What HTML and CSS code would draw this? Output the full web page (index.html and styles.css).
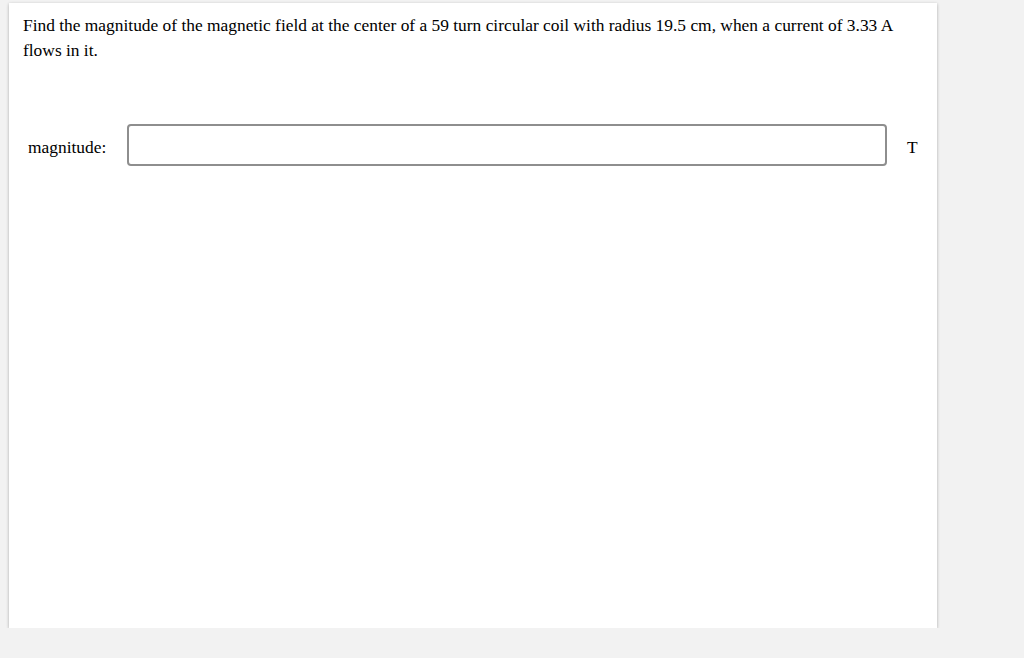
FILE: index.html
```html
<!DOCTYPE html>
<html>
<head>
<meta charset="utf-8">
<link rel="stylesheet" href="styles.css">
</head>
<body>
<div class="card">
  <p class="question">Find the magnitude of the magnetic field at the center of a 59 turn circular coil with radius 19.5 cm, when a current of 3.33 A flows in it.</p>
  <div class="answer-row">
    <label class="label">magnitude:</label>
    <div class="input"></div>
    <span class="unit">T</span>
  </div>
</div>
</body>
</html>
```
FILE: styles.css
```css
html, body {
  margin: 0;
  padding: 0;
  background: #f2f2f2;
  font-family: "Liberation Serif", "Times New Roman", serif;
  font-size: 17.4px;
  color: #000;
}
body {
  padding: 3px 0 0 9px;
}
.card {
  box-sizing: border-box;
  width: 928px;
  height: 625px;
  background: #fff;
  box-shadow: 0 1px 3px rgba(0,0,0,0.3);
  padding: 10px 14px;
}
.question {
  margin: 0;
  line-height: 25px;
  width: 885px;
}
.answer-row {
  display: flex;
  align-items: flex-start;
  margin-top: 61px;
  padding-left: 5px;
}
.label {
  width: 99px;
  line-height: 25px;
  margin-top: 11px;
}
.input {
  box-sizing: border-box;
  width: 760px;
  height: 42px;
  border: 2px solid #8e8e8e;
  border-radius: 4px;
}
.unit {
  margin-left: 20px;
  line-height: 25px;
  margin-top: 11px;
}
```
